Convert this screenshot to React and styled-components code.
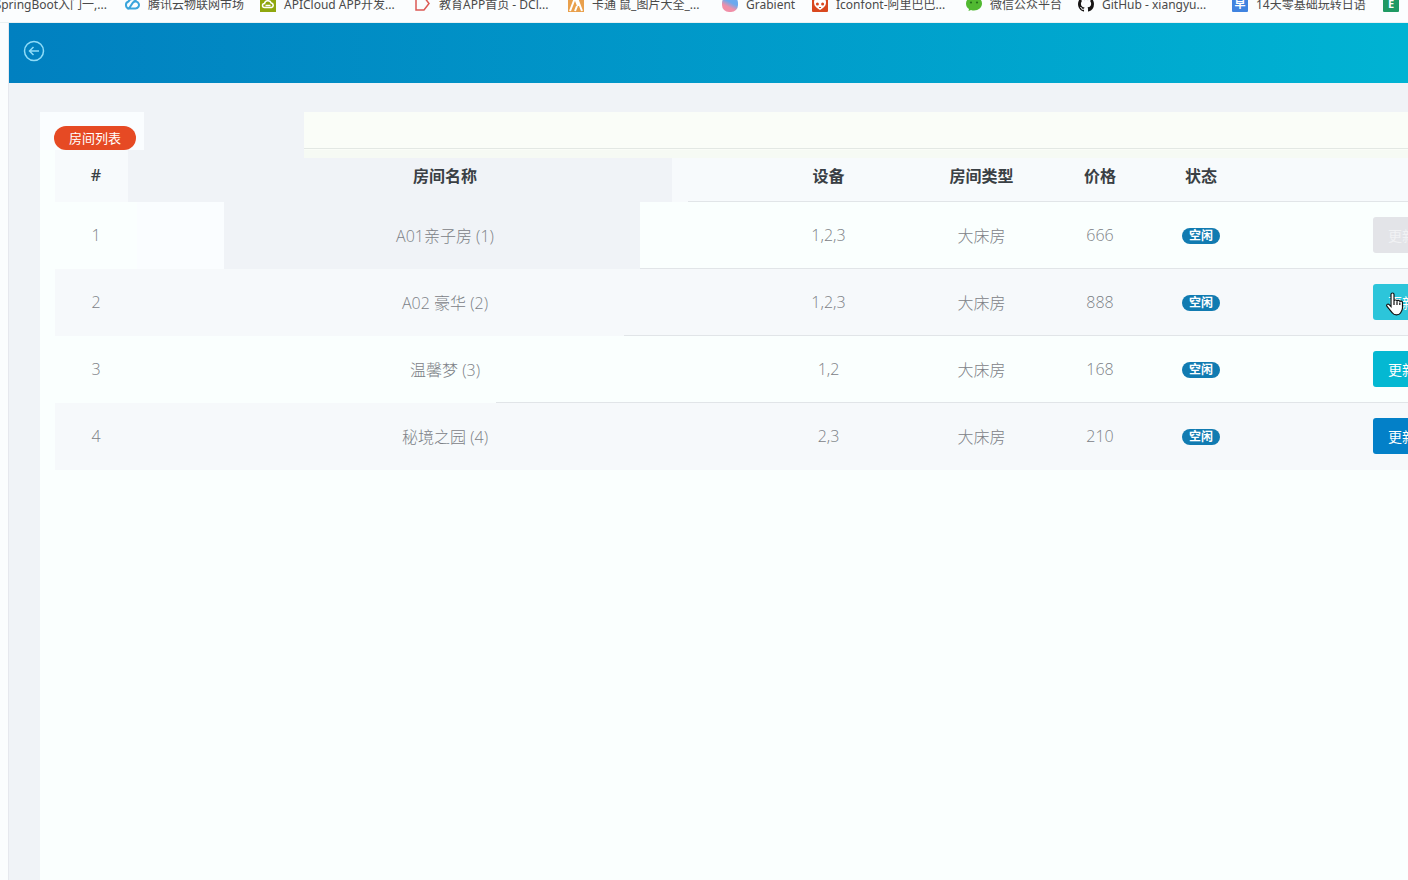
import React from 'react';
import styled, { createGlobalStyle } from 'styled-components';

const bookmarks = [
  { icon: 'tencent', label: '腾讯云物联网市场', width: 136 },
  { icon: 'apicloud', label: 'APICloud APP开发...', width: 155 },
  { icon: 'dcloud', label: '教育APP首页 - DCl...', width: 153 },
  { icon: 'cartoon', label: '卡通 鼠_图片大全_...', width: 154 },
  { icon: 'grabient', label: 'Grabient', width: 90 },
  { icon: 'iconfont', label: 'Iconfont-阿里巴巴...', width: 154 },
  { icon: 'wechat', label: '微信公众平台', width: 112 },
  { icon: 'github', label: 'GitHub - xiangyu...', width: 154 },
  { icon: 'japanese', label: '14天零基础玩转日语', width: 151 },
  { icon: 'excel', label: 'E', width: 40, iconOnly: true },
];

const rooms = [
  { id: 1, name: 'A01亲子房 (1)', devices: '1,2,3', type: '大床房', price: 666, status: '空闲', button: 'fading', line: 585 },
  { id: 2, name: 'A02 豪华 (2)', devices: '1,2,3', type: '大床房', price: 888, status: '空闲', button: 'hover', line: 569 },
  { id: 3, name: '温馨梦 (3)', devices: '1,2', type: '大床房', price: 168, status: '空闲', button: 'info', line: 441 },
  { id: 4, name: '秘境之园 (4)', devices: '2,3', type: '大床房', price: 210, status: '空闲', button: 'primary', line: 0 },
];

const icons = {
  tencent: (
    <g fill="none" stroke="#3aa5dc" strokeWidth="2">
      <path d="M5 12.500a3.600 3.600 0 0 1-.5-7A4.300 4.300 0 0 1 12 5" />
      <path d="M5 12.500h6.500a3.500 3.500 0 1 0-2.500-6z" />
    </g>
  ),
  apicloud: (
    <g>
      <rect width="16" height="16" fill="#8fa70f" />
      <path d="M4.500 11.500a2 2 0 0 1 0-4 3.500 3.500 0 0 1 6.700-.5 2.300 2.300 0 0 1 .3 4.500z" fill="none" stroke="#fff" strokeWidth="1.500" />
      <path d="M5.500 9.500h5" stroke="#fff" strokeWidth="1.500" />
    </g>
  ),
  dcloud: <path d="M1 1h8l5 6.500L9 14H1z" fill="none" stroke="#dc5a55" strokeWidth="1.500" />,
  cartoon: (
    <g>
      <rect width="16" height="16" fill="#e9a04c" />
      <path d="M2 15 7 2l3 8M9 2l5 13M7 15l2-5" fill="none" stroke="#fff" strokeWidth="2" />
    </g>
  ),
  grabient: (
    <g>
      <defs>
        <linearGradient id="grabient" x1="0" y1="1" x2="0.500" y2="0">
          <stop offset="0.400" stopColor="#f08fa8" />
          <stop offset="0.700" stopColor="#6aa9ee" />
        </linearGradient>
      </defs>
      <rect width="16" height="16" rx="7" fill="url(#grabient)" />
    </g>
  ),
  iconfont: (
    <g>
      <rect width="16" height="16" rx="1" fill="#d9481f" />
      <path d="M2 6c0-3 2-4 6-4s6 1 6 4c0 3-1 4-3 6L8 14l-3-2C3 10 2 9 2 6z" fill="#fff" />
      <circle cx="5.400" cy="8" r="1.500" fill="#d9481f" />
      <circle cx="10.600" cy="8" r="1.500" fill="#d9481f" />
      <path d="M7 11.500h2" stroke="#d9481f" />
    </g>
  ),
  wechat: (
    <g>
      <path d="M8 1c4.500 0 8 2.500 8 6.500S12.500 14.500 8 14.500c-1 0-2 0-3-.5l-2.500 1 .5-2C1 12 0 10 0 7.500 0 3.500 3.500 1 8 1z" fill="#51b932" />
      <circle cx="5" cy="6.500" r="1.100" fill="#24701a" />
      <circle cx="11" cy="6.500" r="1.100" fill="#24701a" />
    </g>
  ),
  github: (
    <path
      fill="#171515"
      d="M8 0C3.580 0 0 3.580 0 8c0 3.540 2.290 6.530 5.470 7.590.4.070.55-.17.55-.38v-1.490c-2.010.37-2.530-.49-2.690-.94-.09-.23-.48-.94-.82-1.130-.28-.15-.68-.52-.01-.53.63-.01 1.080.58 1.230.82.72 1.210 1.870.87 2.330.66.070-.52.28-.87.51-1.070-1.780-.2-3.640-.89-3.640-3.950 0-.87.31-1.590.82-2.150-.08-.2-.36-1.020.08-2.120 0 0 .67-.21 2.200.82a7.400 7.400 0 0 1 4 0c1.530-1.040 2.200-.82 2.200-.82.44 1.100.16 1.920.08 2.120.51.56.82 1.270.82 2.150 0 3.070-1.870 3.750-3.650 3.950.29.25.54.73.54 1.480v2.200c0 .21.15.46.55.38A8 8 0 0 0 16 8c0-4.420-3.580-8-8-8z"
    />
  ),
};

const Bookmark = ({ icon, label, width, iconOnly }) => (
  <BookmarkLink href="#" $width={width} aria-label={label}>
    {icon === 'japanese' && <Tile $color="#3f83e0">早</Tile>}
    {icon === 'excel' && <Tile $color="#1f9a63">E</Tile>}
    {icons[icon] && (
      <svg width="16" height="16" viewBox="0 0 16 16" aria-hidden="true">
        {icons[icon]}
      </svg>
    )}
    {!iconOnly && <span>{label}</span>}
  </BookmarkLink>
);

const App = () => {
  return (
    <Browser>
      <GlobalStyle />
      <BookmarkBar aria-label="Bookmarks">
        <FirstBookmark href="#">SpringBoot入门一,...</FirstBookmark>
        {bookmarks.map((item) => (
          <Bookmark key={item.label} {...item} />
        ))}
      </BookmarkBar>
      <Page>
        <Header>
          <BackButton type="button" aria-label="返回">
            <svg width="22" height="22" viewBox="0 0 22 22" fill="none" stroke="currentColor" strokeWidth="1.500">
              <circle cx="11" cy="11" r="9.500" />
              <path d="M16 11H6.500M10.500 7 6.500 11l4 4" />
            </svg>
          </BackButton>
        </Header>
        <Card>
          <CardHeader>
            <Tag>房间列表</Tag>
          </CardHeader>
          <Table>
            <colgroup>
              <Col $width={82} />
              <Col />
              <Col $width={151} />
              <Col $width={155} />
              <Col $width={82} />
              <Col $width={120} />
              <Col $width={147} />
            </colgroup>
            <thead>
              <HeadRow>
                <th>#</th>
                <th>房间名称</th>
                <th>设备</th>
                <th>房间类型</th>
                <th>价格</th>
                <th>状态</th>
                <th aria-label="操作" />
              </HeadRow>
            </thead>
            <tbody>
              {rooms.map((room) => (
                <Row key={room.id} $line={room.line}>
                  <td>{room.id}</td>
                  <td>{room.name}</td>
                  <td>{room.devices}</td>
                  <td>{room.type}</td>
                  <td>{room.price}</td>
                  <td>
                    <Badge>{room.status}</Badge>
                  </td>
                  <ActionCell>
                    <Action>
                      <UpdateButton type="button" $variant={room.button}>
                        更新
                      </UpdateButton>
                      {room.button === 'hover' && <Hand />}
                    </Action>
                  </ActionCell>
                </Row>
              ))}
            </tbody>
          </Table>
        </Card>
      </Page>
    </Browser>
  );
};

const Hand = () => (
  <HandIcon width="20" height="25" viewBox="0 0 20 25" aria-hidden="true">
    <path
      d="M6 2.500c0-2 3-2 3 0V9c0-1.500 3-1.300 3 .3.300-1.500 2.800-1.200 2.800.5.400-1.200 2.700-.8 2.700.8V16c0 2-1 3.500-2 5-1.500 2.500-6.500 2.500-8 0L2 14.500c-1.200-1.800.8-3.200 2.200-1.900L6 14.500z"
      fill="#fff"
      stroke="#111"
      strokeWidth="1.200"
    />
    <path d="M9 9v4M12 9.500V13M14.800 10.500V13" stroke="#111" strokeWidth="1.200" />
  </HandIcon>
);

const GlobalStyle = createGlobalStyle`
  * {
    box-sizing: border-box;
  }
  body {
    margin: 0;
    background: #fbfdfe;
    color: #7c8186;
    font-family: "Open Sans", "Noto Sans CJK SC", sans-serif;
    font-size: 16px;
    overflow-x: hidden;
  }
`;

const Browser = styled.div`
  display: flex;
  flex-direction: column;
  min-height: 100vh;
  overflow: hidden;
`;

const BookmarkBar = styled.nav`
  display: flex;
  align-items: flex-end;
  height: 23px;
  overflow: hidden;
  border-bottom: 1px solid #e9f1f2;
`;

const BookmarkLink = styled.a`
  display: flex;
  flex: none;
  align-items: center;
  gap: 8px;
  width: ${(props) => props.$width}px;
  height: 36px;
  color: #4a4a4a;
  font-family: "Noto Sans", "Noto Sans CJK SC", sans-serif;
  font-size: 12px;
  text-decoration: none;
  white-space: nowrap;
`;

const FirstBookmark = styled(BookmarkLink)`
  justify-content: flex-end;
  width: 124px;
  padding-right: 17px;
`;

const Tile = styled.b`
  width: 16px;
  height: 16px;
  border-radius: 1px;
  background: ${(props) => props.$color};
  color: #fff;
  font-size: 11px;
  line-height: 16px;
  text-align: center;
`;

const Page = styled.div`
  display: flex;
  flex: 1;
  flex-direction: column;
  margin-left: 8px;
  border-left: 1px solid #e6e8ee;
  background: #f0f3f7;
`;

const Header = styled.header`
  display: flex;
  align-items: center;
  height: 60px;
  padding: 0 14px 4px;
  background: linear-gradient(to right, #0180c0, #00b3d3);
`;

const BackButton = styled.button`
  display: flex;
  padding: 0;
  border: none;
  background: none;
  color: #8fdcf8;
  cursor: pointer;
`;

const Card = styled.main`
  flex: 1;
  margin: 29px 0 0 31px;
  padding-left: 15px;
  background: #fafffe;
`;

const CardHeader = styled.div`
  display: flex;
  align-items: flex-end;
  height: 38px;
  margin-left: -15px;
  padding-left: 14px;
  background:
    linear-gradient(#e3e8e4, #e3e8e4) 264px 36px / 100% 1px no-repeat,
    linear-gradient(to right, #fafdff 104px, #f0f3f7 104px, #f0f3f7 264px, #fafdf8 264px);
`;

const Tag = styled.span`
  width: 82px;
  height: 24px;
  border-radius: 12px;
  background: #e64a24;
  color: #fff;
  font-size: 13px;
  line-height: 24px;
  text-align: center;
`;

const Table = styled.table`
  width: 100%;
  table-layout: fixed;
  border-collapse: collapse;
  text-align: center;
  th,
  td {
    padding: 0;
  }
`;

const Col = styled.col`
  width: ${(props) => (props.$width ? `${props.$width}px` : 'auto')};
`;

const HeadRow = styled.tr`
  height: 52px;
  background:
    linear-gradient(#e1e5e8, #e1e5e8) 633px 100% / 100% 1px no-repeat,
    linear-gradient(#f6faf4, #f6faf4) 249px 0 / 100% 8px no-repeat,
    linear-gradient(to right, #f7fafc 73px, #f0f3f7 73px, #f0f3f7 617px, #f7fafc 617px);
  color: #3a3f44;
  th {
    padding-bottom: 2px;
    font-weight: 600;
  }
`;

const Row = styled.tr`
  height: 67px;
  background: ${(props) =>
    props.$line ? `linear-gradient(#e1e5e8, #e1e5e8) ${props.$line}px 100% / 100% 1px no-repeat` : 'none'};
  font-weight: 300;
  td {
    padding-bottom: 2px;
  }
  &:nth-child(even) {
    background-color: #f6f9fb;
  }
  &:first-child td:nth-child(2) {
    background: linear-gradient(to right, #fafdff 87px, #f0f3f7 87px, #f0f3f7 503px, transparent 503px);
  }
`;

const Badge = styled.span`
  display: inline-block;
  padding: 0 7px;
  border-radius: 8px;
  background: #117bb1;
  color: #fff;
  font-size: 12px;
  font-weight: 700;
  line-height: 16px;
  vertical-align: middle;
`;

const ActionCell = styled.td`
  text-align: left;
`;

const Action = styled.div`
  position: relative;
  margin-left: 112px;
`;

const variants = {
  fading: '#e3e4e8',
  hover: '#2cc5da',
  info: '#04b8d2',
  primary: '#0380c8',
};

const UpdateButton = styled.button`
  display: block;
  width: 58px;
  height: 36px;
  padding: 0;
  border: none;
  border-radius: 3px;
  background: ${(props) => variants[props.$variant]};
  color: ${(props) => (props.$variant === 'fading' ? '#f1f2f4' : '#fff')};
  font-family: inherit;
  font-size: 14px;
  cursor: pointer;
`;

const HandIcon = styled.svg`
  position: absolute;
  top: 8px;
  left: 12px;
`;

export default App;
